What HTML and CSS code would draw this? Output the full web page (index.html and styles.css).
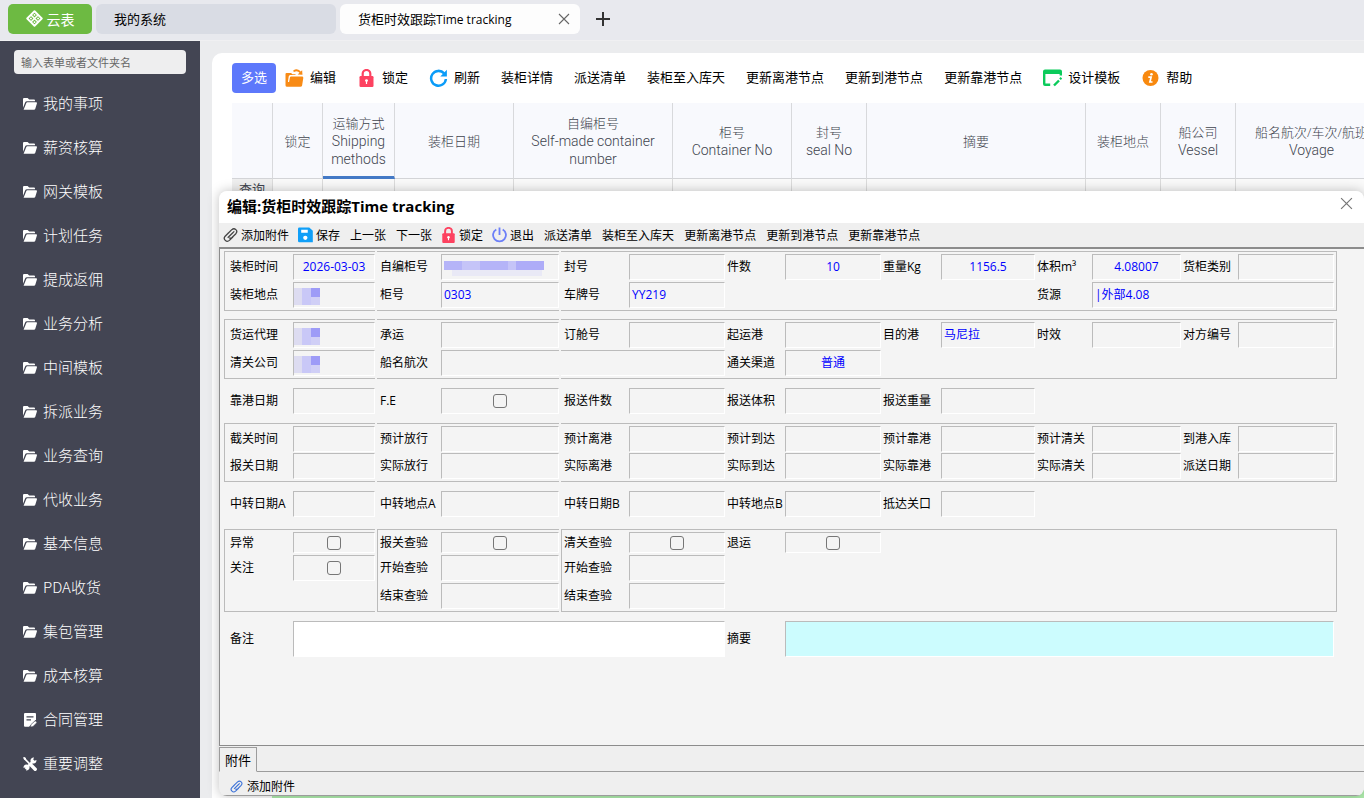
FILE: index.html
```html
<!DOCTYPE html>
<html lang="zh-CN">
<head>
    <meta charset="UTF-8">
    <meta name="viewport" content="width=device-width, initial-scale=1.0">
    <title>云表 - 货柜时效跟踪</title>
    <link rel="stylesheet" href="styles.css">
</head>
<body>
    <!-- 图标 -->
    <svg width="0" height="0" class="sprite" aria-hidden="true">
        <symbol id="i-folder" viewBox="0 0 14 12">
            <path d="M0 1.2Q0 0 1 0H4.6L6.2 1.6H11Q12 1.6 12 2.6V3.2H4Q2.6 3.2 2.1 4.5L0 9.8Z" fill="#fff"/>
            <path d="M3.2 5.2Q3.5 4.2 4.4 4.2H13.2Q14.2 4.2 13.9 5.4L12.3 10.8Q12 11.8 11 11.8H.6Z" fill="#fff"/>
        </symbol>
        <symbol id="i-note" viewBox="0 0 14 14">
            <path d="M1 1Q1 0 2 0H12Q13 0 13 1V6.5L6 13.8H2Q1 13.8 1 12.8Z" fill="#fff"/>
            <path d="M3.5 3.8H10.5M3.5 6.8H8" stroke="#434553" stroke-width="1.2"/>
            <path d="M7.5 14L8 11.5L12.2 7.8L14 9.6L10 13.5Z" fill="#fff" stroke="#434553" stroke-width=".5"/>
        </symbol>
        <symbol id="i-tools" viewBox="0 0 14 14">
            <path d="M1 1.2L6.6 6.8" stroke="#fff" stroke-width="1.7"/>
            <path d="M8.5 8.5L12.2 12.2" stroke="#fff" stroke-width="3.4" stroke-linecap="round"/>
            <path d="M2.4 11.8L10.8 3.4" stroke="#fff" stroke-width="2.4"/>
            <path d="M12.8 1.6L10.6 3.6M13.4 3A3 3 0 1 1 11 .6L10.2 2.6L11.4 3.8Z" fill="#fff"/>
            <path d="M.6 11A3 3 0 1 1 3 13.4L3.8 11.4L2.6 10.2Z" fill="#fff"/>
            <path d="M0 .6L1.2 0L3 1L2.8 2.4L1.6 2.8Z" fill="#fff"/>
        </symbol>
        <symbol id="i-logo" viewBox="0 0 18 18">
            <path d="M9 1.3L16.7 9L9 16.7L1.3 9Z" fill="none" stroke="#fff" stroke-width="2" stroke-linejoin="round"/>
            <path d="M5 5L13 13M13 5L5 13" stroke="#fff" stroke-width="1.6"/>
            <path d="M9 4.2V6.2M9 11.8V13.8M4.2 9H6.2M11.8 9H13.8" stroke="#fff" stroke-width="1.6"/>
        </symbol>
        <symbol id="i-edit" viewBox="0 0 18 18">
            <path d="M0 5Q0 4 1 4H5.5L7 5.2H10V6H4.8Q3.4 6 3.2 7.5L2.4 13H3.6L4.4 8.6Q4.6 7.6 5.6 7.6H16.5Q18 7.6 17.8 9L16.6 16.4Q16.3 17.8 14.8 17.8H1.6Q0 17.8 0 16.2Z" fill="#f88b16"/>
            <path d="M8 2.4Q12-.4 15 3.6" fill="none" stroke="#f88b16" stroke-width="1.7"/>
            <path d="M12.2 5.6L17 5.8L16.6 1.2Z" fill="#f88b16"/>
        </symbol>
        <symbol id="i-lock" viewBox="0 0 14 18">
            <path d="M3.2 8V4.6A3.8 3.6 0 0 1 10.8 4.6V8" fill="none" stroke="#fd4260" stroke-width="2.2"/>
            <rect y="7" width="14" height="11" rx="1.2" fill="#fd4260"/>
            <circle cx="7" cy="11.6" r="1.4" fill="#fff"/>
            <path d="M7 12V15" stroke="#fff" stroke-width="1.2"/>
        </symbol>
        <symbol id="i-refresh" viewBox="0 0 18 18">
            <path d="M14.6 4.4A7.4 7.4 0 1 0 16.4 10" fill="none" stroke="#0b9cf8" stroke-width="2.5"/>
            <path d="M17.4 .8V7.4H10.8Z" fill="#0b9cf8"/>
        </symbol>
        <symbol id="i-design" viewBox="0 0 19 17">
            <path d="M7.2 15.2H2Q1.2 15.2 1.2 14.4V2Q1.2 1.2 2 1.2H17Q17.8 1.2 17.8 2V6" fill="none" stroke="#0bcb5b" stroke-width="2.4"/>
            <path d="M1 2.4H18" stroke="#0bcb5b" stroke-width="4"/>
            <path d="M11 16L16 11" stroke="#0bcb5b" stroke-width="2.4"/>
            <path d="M17 9.8L18.4 8.4" stroke="#0bcb5b" stroke-width="2.2"/>
        </symbol>
        <symbol id="i-help" viewBox="0 0 18 18">
            <circle cx="9" cy="9" r="8" fill="#f8890f"/>
            <circle cx="10" cy="5.2" r="1.3" fill="#fff"/>
            <path d="M6.8 8.2H9.6L8.4 13H11" fill="none" stroke="#fff" stroke-width="1.7"/>
        </symbol>
        <symbol id="i-clip" viewBox="0 0 14 14">
            <path d="M4.4 9.6L9.4 4.6Q10.3 4 10 3.4M9.4 8.6L6 12Q4 13.8 2.1 12T2 8.2L4.8 5.4M4.6 5.6L8.2 2Q10.2.4 12 2T12 5.8L8.4 9.4Q7 10.6 5.8 9.6" fill="none" stroke="currentColor" stroke-width="1.2"/>
        </symbol>
        <symbol id="i-save" viewBox="0 0 16 16">
            <path d="M0 1.4Q0 0 1.4 0H12L15.8 3.4V15.8H1.4Q0 15.8 0 14Z" fill="#109ff8"/>
            <path d="M3.4 3.2H10.4M3.4 4.8H10.4" stroke="#fff" stroke-width="1.6"/>
            <circle cx="7.8" cy="11" r="2.3" fill="#fff"/>
        </symbol>
        <symbol id="i-power" viewBox="0 0 14 14">
            <path d="M4 1.8A6 6 0 1 0 10 1.8" fill="none" stroke="#6c7ff8" stroke-width="1.7"/>
            <path d="M7 0V7" stroke="#6c7ff8" stroke-width="1.7"/>
        </symbol>
        <symbol id="i-close" viewBox="0 0 12 12">
            <path d="M1 1L11 11M11 1L1 11" stroke="currentColor" stroke-width="1.1"/>
        </symbol>
        <symbol id="i-plus" viewBox="0 0 14 14">
            <path d="M7 0V14M0 7H14" stroke="#333" stroke-width="2"/>
        </symbol>
    </svg>

    <header class="topbar">
        <button class="brand"><svg><use href="#i-logo"/></svg>云表</button>
        <a class="tab" href="#">我的系统</a>
        <div class="tab tab-active">
            <a href="#">货柜时效跟踪<span class="latin">Time tracking</span></a>
            <button class="tab-close" aria-label="关闭"><svg><use href="#i-close"/></svg></button>
        </div>
        <button class="tab-add" aria-label="新建"><svg><use href="#i-plus"/></svg></button>
    </header>

    <div class="layout">
        <nav class="sidebar">
            <input type="text" class="search" placeholder="输入表单或者文件夹名" aria-label="搜索">
            <ul class="menu">
                <li><a href="#"><svg><use href="#i-folder"/></svg>我的事项</a></li>
                <li><a href="#"><svg><use href="#i-folder"/></svg>薪资核算</a></li>
                <li><a href="#"><svg><use href="#i-folder"/></svg>网关模板</a></li>
                <li><a href="#"><svg><use href="#i-folder"/></svg>计划任务</a></li>
                <li><a href="#"><svg><use href="#i-folder"/></svg>提成返佣</a></li>
                <li><a href="#"><svg><use href="#i-folder"/></svg>业务分析</a></li>
                <li><a href="#"><svg><use href="#i-folder"/></svg>中间模板</a></li>
                <li><a href="#"><svg><use href="#i-folder"/></svg>拆派业务</a></li>
                <li><a href="#"><svg><use href="#i-folder"/></svg>业务查询</a></li>
                <li><a href="#"><svg><use href="#i-folder"/></svg>代收业务</a></li>
                <li><a href="#"><svg><use href="#i-folder"/></svg>基本信息</a></li>
                <li><a href="#"><svg><use href="#i-folder"/></svg>PDA收货</a></li>
                <li><a href="#"><svg><use href="#i-folder"/></svg>集包管理</a></li>
                <li><a href="#"><svg><use href="#i-folder"/></svg>成本核算</a></li>
                <li><a href="#"><svg class="big"><use href="#i-note"/></svg>合同管理</a></li>
                <li><a href="#"><svg class="big"><use href="#i-tools"/></svg>重要调整</a></li>
            </ul>
        </nav>

        <main class="main">
            <section class="panel">
                <div class="toolbar">
                    <button class="btn-multi">多选</button>
                    <button><svg><use href="#i-edit"/></svg>编辑</button>
                    <button><svg><use href="#i-lock"/></svg>锁定</button>
                    <button><svg><use href="#i-refresh"/></svg>刷新</button>
                    <button>装柜详情</button>
                    <button>派送清单</button>
                    <button>装柜至入库天</button>
                    <button>更新离港节点</button>
                    <button>更新到港节点</button>
                    <button>更新靠港节点</button>
                    <button><svg><use href="#i-design"/></svg>设计模板</button>
                    <button><svg><use href="#i-help"/></svg>帮助</button>
                </div>
                <div class="table-wrap">
                    <table class="list">
                        <colgroup>
                            <col class="w-41"><col class="w-50"><col class="w-72"><col class="w-119"><col class="w-159"><col class="w-119"><col class="w-75"><col class="w-219"><col class="w-75"><col class="w-75"><col class="w-152">
                        </colgroup>
                        <thead>
                            <tr>
                                <th></th>
                                <th>锁定</th>
                                <th class="sorted">运输方式<br><span>Shipping methods</span></th>
                                <th>装柜日期</th>
                                <th>自编柜号<br><span>Self-made container number</span></th>
                                <th>柜号<br><span>Container No</span></th>
                                <th>封号<br><span>seal No</span></th>
                                <th>摘要</th>
                                <th>装柜地点</th>
                                <th>船公司<br><span>Vessel</span></th>
                                <th>船名航次/车次/航班<br><span>Voyage</span></th>
                            </tr>
                        </thead>
                        <tbody>
                            <tr>
                                <td>查询</td><td></td><td></td><td></td><td></td><td></td><td></td><td></td><td></td><td></td><td></td>
                            </tr>
                        </tbody>
                    </table>
                </div>
                <div class="total-row"></div>
            </section>

            <section class="dialog" role="dialog" aria-labelledby="dlg-title">
                <div class="dialog-head">
                    <h2 id="dlg-title">编辑:货柜时效跟踪Time tracking</h2>
                    <button class="dialog-close" aria-label="关闭"><svg><use href="#i-close"/></svg></button>
                </div>
                <div class="dialog-tools">
                    <button><svg><use href="#i-clip"/></svg>添加附件</button>
                    <button><svg><use href="#i-save"/></svg>保存</button>
                    <button>上一张</button>
                    <button>下一张</button>
                    <button><svg><use href="#i-lock"/></svg>锁定</button>
                    <button><svg><use href="#i-power"/></svg>退出</button>
                    <button>派送清单</button>
                    <button>装柜至入库天</button>
                    <button>更新离港节点</button>
                    <button>更新到港节点</button>
                    <button>更新靠港节点</button>
                </div>

                <form class="form">
                    <div class="grid group">
                        <i class="split split-a"></i><i class="split split-b"></i>
                        <label for="f01" class="in">装柜时间</label><input id="f01" type="text" class="center" value="2026-03-03">
                        <label for="f02" class="in">自编柜号</label><input id="f02" type="text" class="mosaic-long">
                        <label for="f03" class="in">封号</label><input id="f03" type="text">
                        <label for="f04">件数</label><input id="f04" type="text" class="center" value="10">
                        <label for="f05">重量Kg</label><input id="f05" type="text" class="center" value="1156.5">
                        <label for="f06">体积m³</label><input id="f06" type="text" class="center" value="4.08007">
                        <label for="f07">货柜类别</label><input id="f07" type="text">
                        <label for="f08" class="in">装柜地点</label><input id="f08" type="text" class="mosaic">
                        <label for="f09" class="in">柜号</label><input id="f09" type="text" value="0303">
                        <label for="f10" class="in">车牌号</label><input id="f10" type="text" value="YY219">
                        <label for="f11" class="col-11">货源</label><input id="f11" type="text" class="span-3" value="|外部4.08">
                    </div>

                    <div class="grid group">
                        <i class="split split-a"></i><i class="split split-b"></i>
                        <label for="f12" class="in">货运代理</label><input id="f12" type="text" class="mosaic">
                        <label for="f13" class="in">承运</label><input id="f13" type="text">
                        <label for="f14" class="in">订舱号</label><input id="f14" type="text">
                        <label for="f15">起运港</label><input id="f15" type="text">
                        <label for="f16">目的港</label><input id="f16" type="text" value="马尼拉">
                        <label for="f17">时效</label><input id="f17" type="text">
                        <label for="f18">对方编号</label><input id="f18" type="text">
                        <label for="f19" class="in">清关公司</label><input id="f19" type="text" class="mosaic">
                        <label for="f20" class="in">船名航次</label><input id="f20" type="text" class="span-3">
                        <label for="f21">通关渠道</label><input id="f21" type="text" class="center" value="普通">
                    </div>

                    <div class="grid loose">
                        <label for="f22" class="in">靠港日期</label><input id="f22" type="text">
                        <label for="f23" class="in">F.E</label><span class="check"><input id="f23" type="checkbox"></span>
                        <label for="f24" class="in">报送件数</label><input id="f24" type="text">
                        <label for="f25">报送体积</label><input id="f25" type="text">
                        <label for="f26">报送重量</label><input id="f26" type="text">
                    </div>

                    <div class="grid group tight">
                        <i class="split split-a"></i><i class="split split-b"></i>
                        <label for="f27" class="in">截关时间</label><input id="f27" type="text">
                        <label for="f28" class="in">预计放行</label><input id="f28" type="text">
                        <label for="f29" class="in">预计离港</label><input id="f29" type="text">
                        <label for="f30">预计到达</label><input id="f30" type="text">
                        <label for="f31">预计靠港</label><input id="f31" type="text">
                        <label for="f32">预计清关</label><input id="f32" type="text">
                        <label for="f33">到港入库</label><input id="f33" type="text">
                        <label for="f34" class="in">报关日期</label><input id="f34" type="text">
                        <label for="f35" class="in">实际放行</label><input id="f35" type="text">
                        <label for="f36" class="in">实际离港</label><input id="f36" type="text">
                        <label for="f37">实际到达</label><input id="f37" type="text">
                        <label for="f38">实际靠港</label><input id="f38" type="text">
                        <label for="f39">实际清关</label><input id="f39" type="text">
                        <label for="f40">派送日期</label><input id="f40" type="text">
                    </div>

                    <div class="grid loose transit">
                        <label for="f41" class="in">中转日期A</label><input id="f41" type="text">
                        <label for="f42" class="in">中转地点A</label><input id="f42" type="text">
                        <label for="f43" class="in">中转日期B</label><input id="f43" type="text">
                        <label for="f44">中转地点B</label><input id="f44" type="text">
                        <label for="f45">抵达关口</label><input id="f45" type="text">
                    </div>

                    <div class="grid group inspect">
                        <i class="split split-a line"></i><i class="split split-b line"></i>
                        <label for="f46" class="in">异常</label><span class="check"><input id="f46" type="checkbox"></span>
                        <label for="f47" class="in">报关查验</label><span class="check"><input id="f47" type="checkbox"></span>
                        <label for="f48" class="in">清关查验</label><span class="check"><input id="f48" type="checkbox"></span>
                        <label for="f49">退运</label><span class="check"><input id="f49" type="checkbox"></span>
                        <label for="f50" class="in col-1">关注</label><span class="check"><input id="f50" type="checkbox"></span>
                        <label for="f51" class="in">开始查验</label><input id="f51" type="text">
                        <label for="f52" class="in">开始查验</label><input id="f52" type="text">
                        <label for="f53" class="in col-3">结束查验</label><input id="f53" type="text">
                        <label for="f54" class="in">结束查验</label><input id="f54" type="text">
                    </div>

                    <div class="grid loose remark">
                        <label for="f55" class="in">备注</label><input id="f55" type="text" class="span-5 white">
                        <label for="f56">摘要</label><input id="f56" type="text" class="span-7 cyan">
                    </div>
                </form>

                <div class="attach-tabs"><button>附件</button></div>
                <div class="attach-tools">
                    <button><svg><use href="#i-clip"/></svg>添加附件</button>
                </div>
            </section>
        </main>
    </div>
</body>
</html>
```
FILE: styles.css
```css
* {
    box-sizing: border-box;
}

body {
    margin: 0;
    height: 100vh;
    display: flex;
    flex-direction: column;
    overflow: hidden;
    font-family: "Open Sans", "Noto Sans CJK SC", sans-serif;
    font-size: 13px;
    color: #000;
    background-color: #e8e9ee;
}

button {
    padding: 0;
    border: none;
    background: none;
    font: inherit;
    color: inherit;
    white-space: nowrap;
    cursor: pointer;
}

a {
    color: inherit;
    text-decoration: none;
}

.sprite {
    position: absolute;
}

/* Barra superior */
.topbar {
    display: flex;
    align-items: center;
    gap: 4px;
    height: 41px;
    padding: 0 8px 3px;
    border-bottom: 1px solid #f0f0f2;
}

.brand {
    display: flex;
    align-items: center;
    justify-content: center;
    gap: 4px;
    width: 84px;
    height: 30px;
    border-radius: 5px;
    background-color: #6dba42;
    color: #fff;
    font-size: 14px;
}

.brand svg {
    width: 17px;
    height: 17px;
}

.tab {
    display: flex;
    align-items: center;
    justify-content: space-between;
    width: 240px;
    height: 30px;
    padding: 0 10px 0 18px;
    border-radius: 6px;
    background-color: #d9dce4;
}

.tab-active {
    background-color: #fdfdfd;
}

.latin {
    font-size: 12px;
}

.tab-close {
    display: flex;
    color: #666;
}

.tab-close svg {
    width: 12px;
    height: 12px;
}

.tab-add {
    display: flex;
    margin-left: 12px;
}

.tab-add svg {
    width: 14px;
    height: 14px;
}

.layout {
    flex: 1;
    display: flex;
    min-height: 0;
}

/* Menú lateral */
.sidebar {
    flex: 0 0 200px;
    padding: 9px 14px 0;
    background-color: #434553;
}

.search {
    display: block;
    width: 100%;
    height: 24px;
    padding: 0 7px;
    border: none;
    border-radius: 4px;
    background-color: #eeeeef;
    font-family: inherit;
    font-size: 11px;
}

.search::placeholder {
    color: #666;
}

.menu {
    list-style: none;
    margin: 8px 0 0;
    padding: 0;
}

.menu a {
    display: flex;
    align-items: center;
    gap: 6px;
    height: 44px;
    padding: 0 0 3px 9px;
    color: #fff;
    font-family: "Noto Sans CJK SC", sans-serif;
    font-size: 15px;
    font-weight: 300;
}

.menu svg {
    width: 14px;
    height: 12px;
    margin-top: 3px;
}

.menu .big {
    height: 14px;
}

/* Panel principal */
.main {
    position: relative;
    flex: 1;
    min-width: 0;
    padding: 12px 0 0 12px;
    background-color: #ebecee;
}

.panel {
    display: flex;
    flex-direction: column;
    height: 100%;
    padding: 10px 0 0 20px;
    border-radius: 10px 0 0 0;
    background-color: #fff;
    overflow: hidden;
}

.toolbar {
    display: flex;
    align-items: center;
    gap: 21px;
    height: 30px;
}

.toolbar button {
    display: flex;
    align-items: center;
    gap: 6px;
    padding-bottom: 3px;
}

.toolbar svg {
    width: 19px;
    height: 18px;
    margin-top: 3px;
}

.toolbar .btn-multi {
    justify-content: center;
    width: 44px;
    height: 30px;
    margin-right: -12px;
    border-radius: 4px;
    background-color: #5d78fb;
    color: #fff;
}

.table-wrap {
    flex: 1;
    margin-top: 10px;
    overflow: hidden;
}

.list {
    width: 1156px;
    table-layout: fixed;
    border-collapse: separate;
    border-spacing: 0;
    color: #40444e;
}

.list th {
    height: 76px;
    padding: 0 4px;
    border-right: 1px solid #d8d9dc;
    border-bottom: 1px solid #d3d4d7;
    background-color: #f8f9fd;
    font-weight: 300;
    line-height: 18px;
}

.list th span {
    font-family: Roboto, sans-serif;
    font-size: 14px;
}

.list .sorted {
    padding-top: 2px;
    border-bottom: 3px solid #4379c6;
}

.list td {
    height: 60px;
    padding: 0;
    border-right: 1px solid #dcdcdc;
    background-color: #fafafa;
    text-align: center;
    vertical-align: top;
}

.list td:first-child {
    background-color: #efefef;
}

.w-41 { width: 41px; }
.w-50 { width: 50px; }
.w-72 { width: 72px; }
.w-75 { width: 75px; }
.w-119 { width: 119px; }
.w-152 { width: 152px; }
.w-159 { width: 159px; }
.w-219 { width: 219px; }

.total-row {
    height: 8px;
    margin-left: 40px;
    background-color: #b0eeae;
}

/* Ventana de edición */
.dialog {
    position: absolute;
    top: 150px;
    right: 0;
    bottom: 2px;
    left: 19px;
    display: flex;
    flex-direction: column;
    border-radius: 8px;
    background-color: #efefef;
    box-shadow: 0 0 12px rgba(0, 0, 0, 0.25);
    overflow: hidden;
    font-size: 12px;
}

.dialog-head {
    display: flex;
    align-items: center;
    justify-content: space-between;
    height: 32px;
    padding: 0 11px 0 8px;
    background-color: #fff;
}

.dialog-head h2 {
    margin: 0;
    padding-bottom: 3px;
    font-size: 15px;
}

.dialog-close {
    display: flex;
    margin-bottom: 8px;
    color: #777;
}

.dialog-close svg {
    width: 13px;
    height: 13px;
}

.dialog-tools {
    display: flex;
    align-items: center;
    gap: 10px;
    height: 24px;
    padding-left: 5px;
}

.dialog-tools button {
    display: flex;
    align-items: center;
    gap: 3px;
}

.dialog-tools svg {
    width: 15px;
    height: 16px;
    margin-left: -1px;
    color: #444;
}

.form {
    flex: 1;
    display: flex;
    flex-direction: column;
    gap: 8px;
    padding: 2px 27px 0 4px;
    border: 1px solid #8c8c8c;
    border-top-width: 2px;
    border-right: none;
    background-color: #f4f4f4;
}

.grid {
    position: relative;
    display: grid;
    grid-template-columns: 68px 82fr 66px 118fr 70px 96fr 60px 96fr 60px 94fr 57px 89fr 57px 96fr;
    grid-auto-rows: 26px;
    row-gap: 2px;
    padding: 2px 2px 2px 0;
    border: 1px solid #bbb;
}

.grid.tight {
    row-gap: 1px;
}

.grid.loose {
    margin: 1px 0;
    padding: 0 2px 0 0;
    border-width: 0 1px;
    border-color: transparent;
}

.grid.transit {
    margin-bottom: 4px;
}

.grid.inspect {
    grid-template-rows: 21px;
}

.grid.remark {
    grid-auto-rows: 36px;
}

/* Cortes verticales entre bloques del grupo */
.split {
    position: absolute;
    top: -1px;
    bottom: -1px;
    left: 0;
    width: 2px;
    background-color: #f4f4f4;
}

.split-a { grid-column: 3; }
.split-b { grid-column: 5; }

.split.line {
    width: 3px;
    border-right: 1px solid #bbb;
}

.grid label {
    align-self: center;
    padding: 0 0 2px 2px;
    white-space: nowrap;
}

.grid .in {
    padding-left: 5px;
}

.grid input,
.check {
    width: 100%;
    min-width: 0;
    height: 100%;
    padding: 0 2px 2px;
    border: 1px solid;
    border-color: #bbb #fff #fff #bbb;
    border-radius: 0;
    background-color: transparent;
    color: #00f;
    font-family: inherit;
    font-size: 12px;
    outline: none;
}

.grid .center {
    text-align: center;
}

.check {
    display: flex;
    align-items: center;
    justify-content: center;
    padding: 0;
}

.check input[type="checkbox"] {
    appearance: none;
    width: 14px;
    height: 14px;
    margin: 0;
    padding: 0;
    border: 1px solid #767676;
    border-radius: 3px;
}

.col-1 { grid-column-start: 1; }
.col-3 { grid-column-start: 3; }
.col-11 { grid-column-start: 11; }
.span-3 { grid-column-end: span 3; }
.span-5 { grid-column-end: span 5; }
.span-7 { grid-column-end: span 7; }

.grid .white {
    background-color: #fff;
}

.grid .cyan {
    background-color: #ccfcfe;
}

/* Datos ocultos con mosaico */
.grid .mosaic {
    background-image:
        linear-gradient(#9d9bf7 9px, #d0cff6 9px),
        linear-gradient(90deg, #dddcf1 8px, #c9c8f7 8px);
    background-size: 9px 17px, 17px 17px;
    background-position: 17px 5px, 0 5px;
    background-repeat: no-repeat;
}

.grid .mosaic-long {
    background-image:
        linear-gradient(90deg, #b5b4f8 18px, #c5c4f8 18px 36px, #b5b4f8 36px 64px, #c5c4f8 64px 72px, #aeacf8 72px),
        linear-gradient(#e9e9f6, #e9e9f6);
    background-size: 100px 9px, 90px 6px;
    background-position: 2px 6px, 10px 15px;
    background-repeat: no-repeat;
}

/* Adjuntos */
.attach-tabs {
    display: flex;
    height: 26px;
    padding-top: 1px;
    border-bottom: 1px solid #9c9c9c;
}

.attach-tabs button {
    height: 25px;
    padding: 0 5px;
    border: 1px solid #9c9c9c;
    border-bottom-color: #efefef;
    font-size: 13px;
}

.attach-tools {
    height: 24px;
    padding: 5px 0 0 11px;
    border-bottom: 1px solid #9c9c9c;
}

.attach-tools button {
    display: flex;
    align-items: center;
    gap: 4px;
}

.attach-tools svg {
    width: 13px;
    height: 13px;
    color: #3f74d8;
}
```
